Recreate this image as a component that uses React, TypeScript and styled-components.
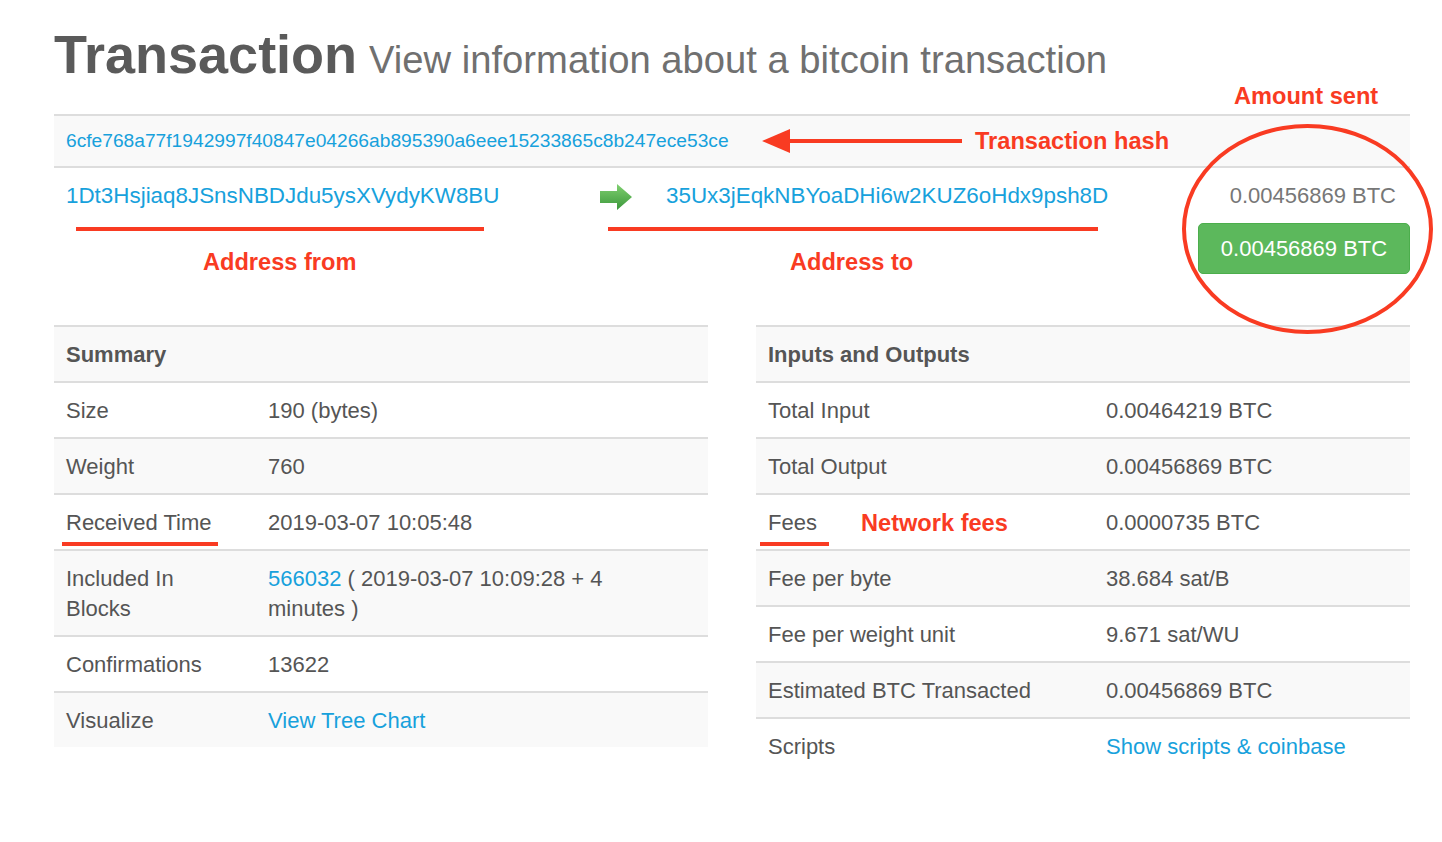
import React from "react";
import styled, { createGlobalStyle } from "styled-components";

const GlobalStyle = createGlobalStyle`
  * { box-sizing: border-box; }
  body {
    margin: 0;
    background: #fff;
    font-family: "Liberation Sans", Arial, Helvetica, sans-serif;
    color: #555;
  }
`;

const BLUE = "#17a1dc";
const RED = "#f93b22";

const Page = styled.div`
  position: relative;
  width: 1442px;
  min-height: 842px;
  padding: 1px 32px 0 54px;
`;

const Title = styled.h1`
  margin: 23px 0 30px;
  font-size: 54px;
  line-height: 60px;
  height: 60px;
  font-weight: 700;
  color: #5a5a5a;
  white-space: nowrap;
`;

const Subtitle = styled.small`
  font-size: 38.2px;
  line-height: 1;
  font-weight: 400;
  color: #707070;
  margin-left: 12px;
`;

const TopBlock = styled.div`
  border-top: 2px solid #ddd;
  margin-bottom: 39px;
`;

const HashRow = styled.div`
  background: #f9f9f9;
  padding: 12px;
  font-size: 19.2px;
  line-height: 26px;
  border-bottom: 2px solid #ddd;
`;

const Link = styled.a`
  color: ${BLUE};
  text-decoration: none;
`;

const AddressRow = styled.div`
  display: grid;
  grid-template-columns: 534px 66px 1fr 224px;
  font-size: 22px;
  line-height: 30px;
`;

const AddressCell = styled.div`
  padding: 13px 12px 11px;
  font-size: 22.4px;
`;

const ArrowCell = styled.div`
  padding: 16px 12px 12px;
  display: flex;
  align-items: flex-start;
`;

const AmountCell = styled.div`
  padding: 13px 0 12px 12px;
  display: flex;
  flex-direction: column;
  align-items: flex-end;
`;

const Amount = styled.span`
  color: #777;
  padding-right: 14px;
`;

const SentButton = styled.button`
  margin-top: 12px;
  width: 212px;
  height: 51px;
  border: 1px solid #4cae4c;
  border-radius: 5px;
  background: #5cb85c;
  color: #fff;
  font-family: inherit;
  font-size: 22px;
  line-height: 30px;
  padding: 0;
`;

const Tables = styled.div`
  display: grid;
  grid-template-columns: 654px 654px;
  column-gap: 48px;
  align-items: start;
`;

const Table = styled.table`
  width: 100%;
  table-layout: fixed;
  border-collapse: separate;
  border-spacing: 0;
  font-size: 22px;
  line-height: 30px;

  tbody tr:nth-child(even) td {
    background: #f9f9f9;
  }
`;

const Col = styled.col<{ $w?: number }>`
  width: ${(p) => (p.$w ? `${p.$w}px` : "auto")};
`;

const Th = styled.th`
  text-align: left;
  font-weight: 700;
  padding: 13px 12px 11px;
  border-top: 2px solid #ddd;
  background: #f9f9f9;
`;

const Td = styled.td<{ $padRight?: number }>`
  padding: 13px ${(p) => p.$padRight ?? 12}px 11px 12px;
  border-top: 2px solid #ddd;
  vertical-align: top;
  color: #555;
`;

const Overlay = styled.div`
  position: absolute;
  inset: 0;
  pointer-events: none;
`;

const Note = styled.span<{ $x: number; $y: number }>`
  position: absolute;
  left: ${(p) => p.$x}px;
  top: ${(p) => p.$y}px;
  color: ${RED};
  font-size: 23.6px;
  line-height: 24px;
  font-weight: 700;
  white-space: nowrap;
`;

const Underline = styled.div<{ $x: number; $y: number; $w: number }>`
  position: absolute;
  left: ${(p) => p.$x}px;
  top: ${(p) => p.$y}px;
  width: ${(p) => p.$w}px;
  height: 4px;
  background: ${RED};
`;

const Ring = styled.div`
  position: absolute;
  left: 1182px;
  top: 124px;
  width: 251px;
  height: 210px;
  border: 4px solid ${RED};
  border-radius: 50%;
`;

const Pointer = styled.svg`
  position: absolute;
  left: 762px;
  top: 128px;
`;

function GreenArrow() {
  return (
    <svg width="32" height="26" viewBox="0 0 32 26">
      <defs>
        <linearGradient id="ga" x1="0" y1="0" x2="0" y2="1">
          <stop offset="0" stopColor="#80d070" />
          <stop offset="1" stopColor="#3b973b" />
        </linearGradient>
      </defs>
      <polygon points="0,7 17,7 17,0 32,13 17,26 17,19 0,19" fill="url(#ga)" />
    </svg>
  );
}

const summary: [string, React.ReactNode][] = [
  ["Size", "190 (bytes)"],
  ["Weight", "760"],
  ["Received Time", "2019-03-07 10:05:48"],
  [
    "Included In Blocks",
    <>
      <Link href="#">566032</Link> ( 2019-03-07 10:09:28 + 4 minutes )
    </>,
  ],
  ["Confirmations", "13622"],
  ["Visualize", <Link href="#">View Tree Chart</Link>],
];

const io: [string, React.ReactNode][] = [
  ["Total Input", "0.00464219 BTC"],
  ["Total Output", "0.00456869 BTC"],
  ["Fees", "0.0000735 BTC"],
  ["Fee per byte", "38.684 sat/B"],
  ["Fee per weight unit", "9.671 sat/WU"],
  ["Estimated BTC Transacted", "0.00456869 BTC"],
  ["Scripts", <Link href="#">Show scripts &amp; coinbase</Link>],
];

export default function App() {
  return (
    <Page>
      <GlobalStyle />
      <Title>
        Transaction<Subtitle>View information about a bitcoin transaction</Subtitle>
      </Title>

      <TopBlock>
        <HashRow>
          <Link href="#">6cfe768a77f1942997f40847e04266ab895390a6eee15233865c8b247ece53ce</Link>
        </HashRow>
        <AddressRow>
          <AddressCell>
            <Link href="#">1Dt3Hsjiaq8JSnsNBDJdu5ysXVydyKW8BU</Link>
          </AddressCell>
          <ArrowCell>
            <GreenArrow />
          </ArrowCell>
          <AddressCell>
            <Link href="#">35Ux3jEqkNBYoaDHi6w2KUZ6oHdx9psh8D</Link>
          </AddressCell>
          <AmountCell>
            <Amount>0.00456869 BTC</Amount>
            <SentButton>0.00456869 BTC</SentButton>
          </AmountCell>
        </AddressRow>
      </TopBlock>

      <Tables>
        <Table>
          <colgroup>
            <Col $w={202} />
            <Col />
          </colgroup>
          <thead>
            <tr>
              <Th colSpan={2}>Summary</Th>
            </tr>
          </thead>
          <tbody>
            {summary.map(([label, value], i) => (
              <tr key={i}>
                <Td $padRight={20}>{label}</Td>
                <Td $padRight={48}>{value}</Td>
              </tr>
            ))}
          </tbody>
        </Table>

        <Table>
          <colgroup>
            <Col $w={338} />
            <Col />
          </colgroup>
          <thead>
            <tr>
              <Th colSpan={2}>Inputs and Outputs</Th>
            </tr>
          </thead>
          <tbody>
            {io.map(([label, value], i) => (
              <tr key={i}>
                <Td>{label}</Td>
                <Td>{value}</Td>
              </tr>
            ))}
          </tbody>
        </Table>
      </Tables>

      <Overlay>
        <Note $x={1234} $y={84}>Amount sent</Note>
        <Pointer width="200" height="26" viewBox="0 0 200 26">
          <polygon points="0,13 28,1 28,25" fill={RED} />
          <rect x="26" y="11" width="174" height="4" fill={RED} />
        </Pointer>
        <Note $x={975} $y={129}>Transaction hash</Note>
        <Ring />
        <Underline $x={76} $y={227} $w={408} />
        <Underline $x={608} $y={227} $w={490} />
        <Note $x={203} $y={250}>Address from</Note>
        <Note $x={790} $y={250}>Address to</Note>
        <Underline $x={62} $y={542} $w={156} />
        <Underline $x={760} $y={542} $w={69} />
        <Note $x={861} $y={511}>Network fees</Note>
      </Overlay>
    </Page>
  );
}
